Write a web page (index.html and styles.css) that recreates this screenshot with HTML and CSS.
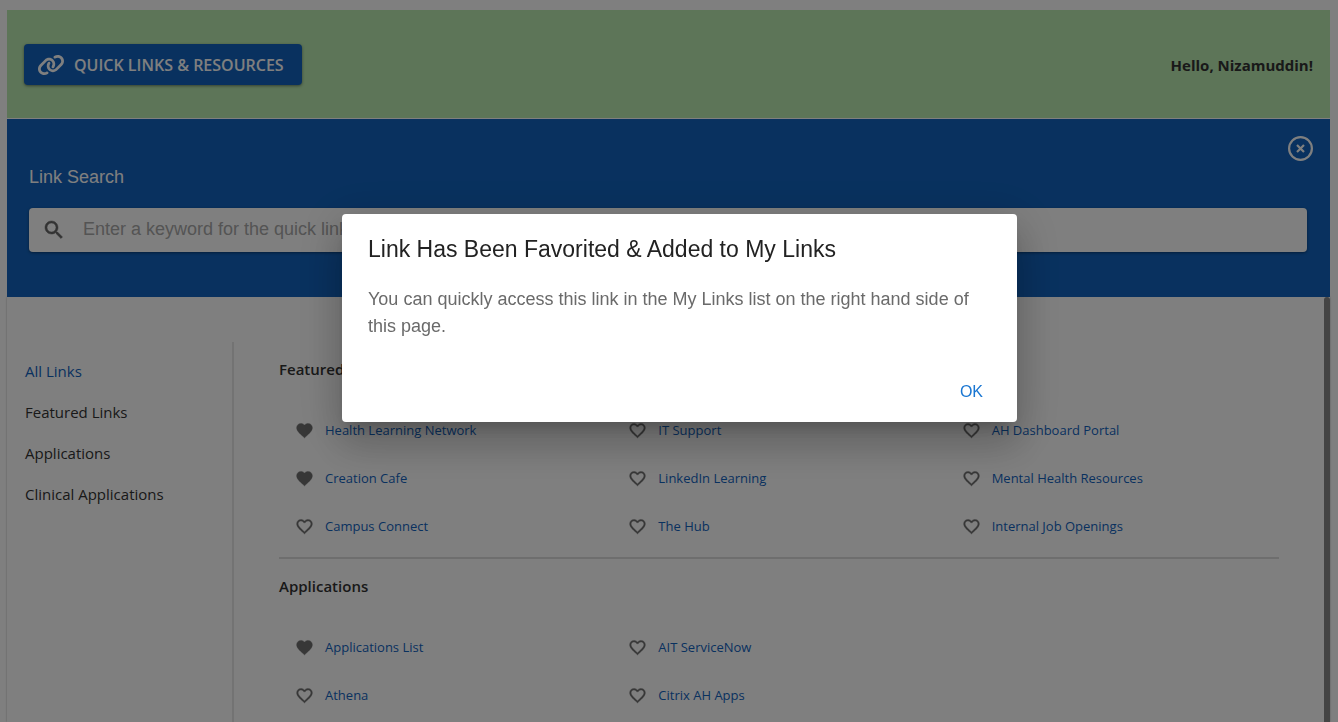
FILE: index.html
```html
<!DOCTYPE html>
<html lang="en">
<head>
<meta charset="utf-8">
<title>Quick Links &amp; Resources</title>
<link rel="stylesheet" href="styles.css">
</head>
<body>
<svg class="sprite" aria-hidden="true">
  <symbol id="heart-full" viewBox="0 0 24 24"><path d="M12 21.35l-1.45-1.32C5.4 15.36 2 12.28 2 8.5 2 5.42 4.42 3 7.5 3c1.74 0 3.41.81 4.5 2.09C13.09 3.81 14.76 3 16.5 3 19.58 3 22 5.42 22 8.5c0 3.78-3.4 6.86-8.55 11.54L12 21.35z"/></symbol>
  <symbol id="heart" viewBox="0 0 24 24"><path d="M16.5 3c-1.74 0-3.41.81-4.5 2.09C10.91 3.81 9.24 3 7.5 3 4.42 3 2 5.42 2 8.5c0 3.78 3.4 6.86 8.55 11.54L12 21.35l1.45-1.32C18.6 15.36 22 12.28 22 8.5 22 5.42 19.58 3 16.5 3zm-4.4 15.55l-.1.1-.1-.1C7.14 14.24 4 11.39 4 8.5 4 6.5 5.5 5 7.5 5c1.54 0 3.04.99 3.57 2.36h1.87C13.46 5.99 14.96 5 16.5 5c2 0 3.5 1.5 3.5 3.5 0 2.89-3.14 5.74-7.9 10.05z"/></symbol>
</svg>
<div class="page">
  <header class="topbar">
    <button class="quick" type="button">
      <svg class="quick-icon" viewBox="0 0 640 512" aria-hidden="true"><path d="M579.8 267.7c56.5-56.5 56.5-148 0-204.500c-50-50-128.800-56.500-186.300-15.400l-1.600 1.100c-14.400 10.300-17.700 30.300-7.400 44.600s30.300 17.700 44.600 7.400l1.600-1.100c32.100-22.900 76-19.300 103.800 8.600c31.500 31.500 31.500 82.500 0 114L422.300 334.800c-31.500 31.500-82.500 31.500-114 0c-27.900-27.900-31.500-71.800-8.600-103.800l1.100-1.600c10.300-14.400 6.900-34.400-7.400-44.600s-34.400-6.900-44.600 7.400l-1.100 1.600C206.500 251.200 213 330 263 380c56.500 56.500 148 56.500 204.500 0L579.800 267.700zM60.200 244.300c-56.500 56.500-56.500 148 0 204.500c50 50 128.800 56.500 186.300 15.400l1.600-1.100c14.400-10.300 17.700-30.300 7.400-44.600s-30.300-17.700-44.600-7.400l-1.600 1.100c-32.100 22.900-76 19.300-103.800-8.600C74 372 74 321 105.500 289.500L217.700 177.200c31.500-31.500 82.500-31.500 114 0c27.900 27.900 31.500 71.800 8.600 103.900l-1.100 1.600c-10.300 14.400-6.900 34.400 7.400 44.600s34.400 6.900 44.600-7.400l1.100-1.600C433.500 260.800 427 182 377 132c-56.500-56.500-148-56.500-204.500 0L60.200 244.300z"/></svg>
      <span>QUICK LINKS &amp; RESOURCES</span>
    </button>
    <strong class="hello">Hello, Nizamuddin!</strong>
  </header>

  <section class="search">
    <button class="close" type="button" aria-label="Close">
      <svg viewBox="0 0 25 25" aria-hidden="true"><circle cx="12.500" cy="12.500" r="11.400"/><path d="M9 9l7 7M16 9l-7 7"/></svg>
    </button>
    <label class="search-label" for="keyword">Link Search</label>
    <div class="search-box">
      <svg class="search-icon" viewBox="0 0 24 24" aria-hidden="true"><path d="M15.500 14h-.79l-.28-.27C15.410 12.590 16 11.110 16 9.500 16 5.910 13.090 3 9.500 3S3 5.910 3 9.500 5.910 16 9.500 16c1.610 0 3.090-.59 4.230-1.570l.27.28v.79l5 4.990L20.490 19l-4.990-5zm-6 0C7.010 14 5 11.990 5 9.500S7.010 5 9.500 5 14 7.010 14 9.500 11.990 14 9.500 14z"/></svg>
      <input id="keyword" class="search-input" type="text" placeholder="Enter a keyword for the quick link">
    </div>
  </section>

  <div class="body">
    <nav class="side">
      <a class="side-link active" href="#">All Links</a>
      <a class="side-link" href="#">Featured Links</a>
      <a class="side-link" href="#">Applications</a>
      <a class="side-link" href="#">Clinical Applications</a>
    </nav>
    <main class="content">
      <section class="group">
        <h2 class="group-title">Featured Links</h2>
        <ul class="links">
          <li class="item"><button class="fav" type="button" aria-label="Unfavorite"><svg><use href="#heart-full"/></svg></button><a href="#">Health Learning Network</a></li>
          <li class="item"><button class="fav" type="button" aria-label="Favorite"><svg><use href="#heart"/></svg></button><a href="#">IT Support</a></li>
          <li class="item"><button class="fav" type="button" aria-label="Favorite"><svg><use href="#heart"/></svg></button><a href="#">AH Dashboard Portal</a></li>
          <li class="item"><button class="fav" type="button" aria-label="Unfavorite"><svg><use href="#heart-full"/></svg></button><a href="#">Creation Cafe</a></li>
          <li class="item"><button class="fav" type="button" aria-label="Favorite"><svg><use href="#heart"/></svg></button><a href="#">LinkedIn Learning</a></li>
          <li class="item"><button class="fav" type="button" aria-label="Favorite"><svg><use href="#heart"/></svg></button><a href="#">Mental Health Resources</a></li>
          <li class="item"><button class="fav" type="button" aria-label="Favorite"><svg><use href="#heart"/></svg></button><a href="#">Campus Connect</a></li>
          <li class="item"><button class="fav" type="button" aria-label="Favorite"><svg><use href="#heart"/></svg></button><a href="#">The Hub</a></li>
          <li class="item"><button class="fav" type="button" aria-label="Favorite"><svg><use href="#heart"/></svg></button><a href="#">Internal Job Openings</a></li>
        </ul>
      </section>
      <section class="group">
        <h2 class="group-title">Applications</h2>
        <ul class="links">
          <li class="item"><button class="fav" type="button" aria-label="Unfavorite"><svg><use href="#heart-full"/></svg></button><a href="#">Applications List</a></li>
          <li class="item"><button class="fav" type="button" aria-label="Favorite"><svg><use href="#heart"/></svg></button><a href="#">AIT ServiceNow</a></li>
          <li class="item row-start"><button class="fav" type="button" aria-label="Favorite"><svg><use href="#heart"/></svg></button><a href="#">Athena</a></li>
          <li class="item"><button class="fav" type="button" aria-label="Favorite"><svg><use href="#heart"/></svg></button><a href="#">Citrix AH Apps</a></li>
        </ul>
      </section>
    </main>
    <div class="scroll-thumb"></div>
  </div>
</div>

<div class="backdrop">
  <div class="dialog" role="dialog" aria-modal="true" aria-labelledby="dialog-title">
    <h1 class="dialog-title" id="dialog-title">Link Has Been Favorited &amp; Added to My Links</h1>
    <p class="dialog-text">You can quickly access this link in the My Links list on the right hand side of this page.</p>
    <div class="dialog-actions"><button class="ok" type="button">OK</button></div>
  </div>
</div>
</body>
</html>
```
FILE: styles.css
```css
* { box-sizing: border-box; }
body {
  margin: 0;
  background: #fff;
  color: #333;
  font-family: "Segoe UI", "Open Sans", "Noto Sans", sans-serif;
  overflow: hidden;
}
button { border: 0; padding: 0; background: none; font: inherit; color: inherit; cursor: pointer; }
a { color: inherit; text-decoration: none; }
.sprite { display: none; }

.page {
  height: 100vh;
  display: flex;
  flex-direction: column;
  padding: 10px 8px 0 7px;
}
.topbar {
  flex: none;
  display: flex;
  align-items: center;
  justify-content: space-between;
  padding: 34px 17px 33px;
  margin-bottom: 1px;
  background: #baeab0;
}
.quick {
  display: flex;
  align-items: center;
  gap: 9px;
  height: 41px;
  padding: 0 18px 0 13px;
  border-radius: 4px;
  background: #1263be;
  color: #fff;
  font-size: 16px;
  font-weight: 600;
  line-height: 24px;
  box-shadow: 0 1px 3px rgba(0, 0, 0, .45);
}
.quick-icon { width: 28px; height: 22px; fill: currentColor; }
.hello { font-size: 15px; font-weight: 700; }

.search {
  flex: none;
  position: relative;
  display: flex;
  flex-direction: column;
  gap: 19px;
  padding: 46px 23px 45px 22px;
  background: #1263be;
  font-family: "Liberation Sans", Arial, sans-serif;
}
.close { position: absolute; top: 17px; right: 17px; width: 25px; height: 25px; }
.close svg { display: block; fill: none; stroke: #fff; stroke-width: 2.2; }
.search-label { color: #fff; font-size: 18px; line-height: 24px; }
.search-box {
  display: flex;
  align-items: center;
  height: 44px;
  padding-left: 13px;
  gap: 17px;
  border-radius: 4px;
  background: #fff;
  box-shadow: 0 1px 3px rgba(0, 0, 0, .4);
}
.search-icon { flex: none; width: 24px; height: 24px; fill: #666; stroke: #666; stroke-width: .5; }
.search-input {
  flex: 1;
  min-width: 0;
  border: 0;
  padding: 0 0 2px;
  background: none;
  font: 18px/24px "Liberation Sans", Arial, sans-serif;
}
.search-input::placeholder { color: #a8a8a8; }

.body {
  flex: 1;
  min-height: 0;
  display: flex;
  overflow: hidden;
  box-shadow: 0 0 2px rgba(0, 0, 0, .3);
}
.side {
  flex: none;
  width: 227px;
  margin-top: 45px;
  padding: 9px 18px;
  border-right: 2px solid #e6e6e6;
}
.side-link { display: block; font-size: 15px; line-height: 41px; }
.side-link.active { color: #1263be; }
.content { flex: 1; padding: 45px 45px 0; }
.group { padding: 15px 0 7px; border-bottom: 2px solid #dcdcdc; }
.group-title { margin: 0 0 25px; font-size: 15px; line-height: 24px; font-weight: 600; }
.links {
  display: grid;
  grid-template-columns: repeat(3, 1fr);
  margin: 0;
  padding: 0;
  list-style: none;
}
.row-start { grid-column-start: 1; }
.item {
  display: flex;
  align-items: center;
  gap: 11px;
  height: 48px;
  padding-left: 16px;
  color: #1263be;
  font-size: 13px;
}
.fav svg { display: block; width: 19px; height: 19px; fill: #6e6e6e; stroke: #6e6e6e; stroke-width: .4; }
.scroll-thumb { flex: none; width: 6px; border-radius: 3px 3px 0 0; background: #888; }

.backdrop {
  position: fixed;
  inset: 0;
  display: flex;
  justify-content: center;
  align-items: flex-start;
  padding: 214px 0 0 21px;
  background: rgba(0, 0, 0, .5);
  font-family: "Liberation Sans", Arial, sans-serif;
}
.dialog {
  width: 675px;
  padding: 19px 26px 14px;
  border-radius: 4px;
  background: #fff;
  box-shadow: 0 11px 15px -7px rgba(0, 0, 0, .2), 0 24px 38px 3px rgba(0, 0, 0, .14), 0 9px 46px 8px rgba(0, 0, 0, .12);
}
.dialog-title { margin: 0 0 21px; font-size: 23px; line-height: 32px; font-weight: 400; color: #222; }
.dialog-text { margin: 0 0 36px; font-size: 18px; line-height: 27px; color: #6a6a6a; }
.dialog-actions { display: flex; justify-content: flex-end; padding-right: 8px; }
.ok { font-size: 16px; line-height: 32px; color: #1976d2; }
```
